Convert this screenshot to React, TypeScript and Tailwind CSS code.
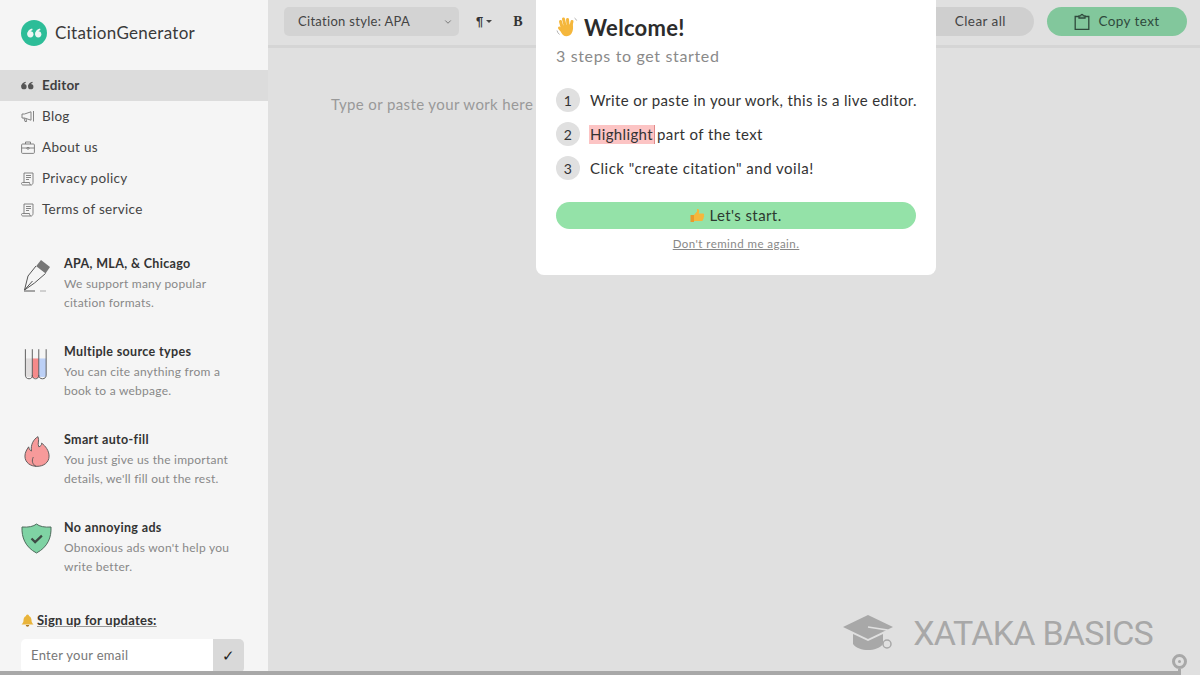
import type { ReactNode } from "react";
import { ChevronDown } from "lucide-react";

const FONT = "font-['Lato','Open_Sans',sans-serif]";

function QuoteMark({ className }: { className?: string }) {
  return (
    <svg viewBox="0 0 16 10" className={className} fill="currentColor">
      <circle cx="3.600" cy="6.400" r="3.300" />
      <path d="M0.300 6.400C0.300 3.500 2.200 1 5.500 0.300L6 1.700C4.400 2.300 3.400 3.300 3.200 4.700z" />
      <circle cx="12" cy="6.400" r="3.300" />
      <path d="M8.700 6.400C8.700 3.500 10.600 1 13.900 0.300L14.400 1.700C12.800 2.300 11.800 3.300 11.600 4.700z" />
    </svg>
  );
}

function Logo() {
  return (
    <div className="w-[26px] h-[26px] rounded-full bg-[#2dbd98] flex items-center justify-center">
      <QuoteMark className="w-[15px] h-[10px] text-[#eef6f4]" />
    </div>
  );
}

function Megaphone() {
  return (
    <svg viewBox="0 0 14 13" className="w-[14px] h-[13px]" fill="none" stroke="#777" strokeWidth="0.9">
      <path d="M12.500 1v10.500M10 1.800L3.500 4H1v4h2.500L10 10.200zM3 8l1 3.500h1.600L5 8.800" />
    </svg>
  );
}

function Briefcase() {
  return (
    <svg viewBox="0 0 14 13" className="w-[14px] h-[13px]" fill="none" stroke="#777" strokeWidth="0.9">
      <rect x="0.600" y="3" width="12.800" height="9.400" rx="1" />
      <path d="M4.500 3V1h5v2M0.600 7h5.400M8 7h5.400M6 6.500h2v1.500H6z" />
    </svg>
  );
}

function Scroll() {
  return (
    <svg viewBox="0 0 13 14" className="w-[13px] h-[14px]" fill="none" stroke="#777" strokeWidth="0.9">
      <path d="M3 10.500V1h9v9.500c0 1-.5 2-1.500 2.500H2c-1 0-1.500-.8-1.500-1.500 0-.6.4-1 1-1h7c0 .8.200 1.600 1 2.500M5 3.500h5M5 5.500h5M5 7.500h3" />
    </svg>
  );
}

function PenIcon() {
  return (
    <svg viewBox="0 0 28 34" className="w-[28px] h-[34px]" fill="none">
      <path d="M18 1l9 7-4.500 6.500-10-6.500z" fill="#777" />
      <path d="M13 7L5 17 1.500 31l10-7 11-9.500" stroke="#555" strokeWidth="1" fill="#f5f5f5" />
      <path d="M1.500 31l8-9" stroke="#555" strokeWidth="1" />
      <path d="M1 32h11" stroke="#555" strokeWidth="1" />
      <path d="M17 32h6" stroke="#aaa" strokeWidth="1" />
    </svg>
  );
}

function TubesIcon() {
  return (
    <svg viewBox="0 0 26 34" className="w-[24px] h-[34px]" fill="none">
      <rect x="2" y="11" width="7" height="20" fill="#e0dddd" />
      <rect x="9" y="11" width="7" height="21" fill="#f58a8a" />
      <rect x="16" y="11" width="8" height="20" fill="#bcd0f6" />
      <path d="M1.500 1v28c0 2.500 1.500 4 4 4s3.500-1.500 3.500-4V1M9 29c0 2.500 1.500 4 3.500 4s3.500-1.500 3.500-4V1M16 29c0 2.500 1.500 4 4 4s4-1.500 4-4V1" stroke="#555" strokeWidth="1" />
    </svg>
  );
}

function FlameIcon() {
  return (
    <svg viewBox="0 0 28 34" className="w-[26px] h-[33px]" fill="none">
      <path d="M15 1c2 5-1 7 1 11 2-.5 3-2 3-4 4 3 8 8 8 14 0 7-6 11-13 11S1 29 1 22c0-4 2-7 4-10 .5 2 1 3.500 3 4.500C7 10 10 4 15 1z" fill="#f79a9a" stroke="#555" strokeWidth="1" />
      <path d="M13 33c-4-2-5-6-3-10" stroke="#555" strokeWidth="1" />
    </svg>
  );
}

function ShieldIcon() {
  return (
    <svg viewBox="0 0 31 31" className="w-[31px] h-[31px]" fill="none">
      <path d="M15.500 1c3 2.500 8 3.500 14.500 3 .5 10-3 20-14.500 26C4 24 .5 14 1 4c6.500.5 11.500-.5 14.500-3z" fill="#7fd3a4" stroke="#4d6a5b" strokeWidth="1" />
      <path d="M10.500 15.500l3.600 3.600 6.800-6.500" stroke="#3d4a44" strokeWidth="2.200" />
    </svg>
  );
}

function BellEmoji() {
  return (
    <svg viewBox="0 0 13 13" className="w-[13px] h-[13px]">
      <path d="M6.500 0.500c1 0 1.500.8 1.500 1.500 1.800.7 2.500 2.400 2.500 4.200 0 2 1 3.300 2 4.300H.500c1-1 2-2.300 2-4.300 0-1.800.700-3.500 2.500-4.200 0-.7.500-1.500 1.500-1.500z" fill="#e9b43a" />
      <path d="M4.800 11h3.400c0 1-.8 1.700-1.700 1.700S4.800 12 4.800 11z" fill="#b07a20" />
    </svg>
  );
}

function WaveEmoji() {
  return (
    <svg viewBox="0 0 22 20" className="w-[22px] h-[20px]">
      <g stroke="#f5b73c" strokeWidth="3" strokeLinecap="round" fill="none">
        <path d="M6 10L4.500 4.500" />
        <path d="M9 8.500L7.500 2" />
        <path d="M12 8L11.500 2.500" />
        <path d="M15 9L16 4.500" />
        <path d="M7 15l-3.500-4" />
      </g>
      <path d="M5.500 8.500l11-1.500c1 3 .8 6.500-1 9.500-2 3-6 3.500-8.500 1.500-2-1.500-2.500-5-1.500-9.500z" fill="#f5b73c" />
      <path d="M1 13.500c.4 1.600 1.200 3 2.500 4M18.500 1c1 .6 1.800 1.500 2.200 2.600" stroke="#aaa" strokeWidth="0.900" fill="none" />
    </svg>
  );
}

function ThumbEmoji() {
  return (
    <svg viewBox="0 0 15 15" className="w-[15px] h-[15px]">
      <path d="M0.500 7h3.500v7H.5z" fill="#e89a2c" />
      <path d="M4 7l3-3.500V1c1.500-.5 2.500.8 2.200 2.300L8.800 5.500H13c1.200 0 1.500 1.300.8 2 .6.600.5 1.600-.2 2 .3.800 0 1.500-.6 1.800.2.900-.3 1.700-1.300 1.700H6.500L4 13z" fill="#f5b73c" />
    </svg>
  );
}

function ClipboardIcon() {
  return (
    <svg viewBox="0 0 16 17" className="w-[16px] h-[17px]" fill="none" stroke="#2f4a3c" strokeWidth="1.300">
      <path d="M5 3.500H1.200v12.800h13.600V3.500H11M5 5V2.800h1.800C7 1 9 1 9.200 2.800H11V5z" />
    </svg>
  );
}

function Watermark() {
  return (
    <div className="absolute right-[47px] bottom-[24px] flex items-center gap-[20px] pointer-events-none">
      <svg viewBox="0 0 50 36" className="w-[50px] h-[36px]">
        <path d="M25 0l25 12-25 12L0 12z" fill="#a8a8a8" />
        <path d="M10 19l15 7 15-7v10c-3 4-9 6-15 6s-12-2-15-6z" fill="#a8a8a8" />
        <path d="M25 12l19 3v10" stroke="#e0e0e0" strokeWidth="1.500" fill="none" />
        <circle cx="44" cy="29" r="4" fill="#e0e0e0" stroke="#a8a8a8" strokeWidth="1.500" />
      </svg>
      <span className="font-['Roboto',sans-serif] text-[34px] leading-none text-[#a8a8a8] tracking-[-0.750px]">XATAKA BASICS</span>
    </div>
  );
}

const NAV = [
  { label: "Blog", icon: <Megaphone /> },
  { label: "About us", icon: <Briefcase /> },
  { label: "Privacy policy", icon: <Scroll /> },
  { label: "Terms of service", icon: <Scroll /> },
];

const FEATURES = [
  { title: "APA, MLA, & Chicago", lines: ["We support many popular", "citation formats."], icon: <div className="pl-[2px]"><PenIcon /></div> },
  { title: "Multiple source types", lines: ["You can cite anything from a", "book to a webpage."], icon: <div className="pl-[3px]"><TubesIcon /></div> },
  { title: "Smart auto-fill", lines: ["You just give us the important", "details, we'll fill out the rest."], icon: <div className="pl-[3px]"><FlameIcon /></div> },
  { title: "No annoying ads", lines: ["Obnoxious ads won't help you", "write better."], icon: <ShieldIcon /> },
];

function Sidebar() {
  return (
    <aside className="w-[268px] shrink-0 bg-[#f5f5f5] flex flex-col overflow-hidden">
      <div className="h-[70px] shrink-0 pl-[21px] flex items-center gap-[8px] pb-[4px]">
        <Logo />
        <span className="text-[17px] text-[#3a3a3a] tracking-[0.300px]">CitationGenerator</span>
      </div>
      <nav className="flex flex-col shrink-0">
        <div className="h-[31px] pl-[21px] flex items-center gap-[8px] bg-[#dcdcdc] text-[13.500px] font-bold text-[#3f3f3f] tracking-[0.200px]">
          <QuoteMark className="w-[13px] h-[9px] text-[#555]" />
          <span>Editor</span>
        </div>
        {NAV.map((n) => (
          <div key={n.label} className="h-[31px] pl-[21px] flex items-center text-[13.500px] text-[#444] tracking-[0.300px]">
            <span className="w-[21px] flex">{n.icon}</span>
            <span>{n.label}</span>
          </div>
        ))}
      </nav>
      <div className="mt-[29px] shrink-0 flex flex-col gap-[16px] pl-[21px]">
        {FEATURES.map((f) => (
          <div key={f.title} className="h-[72px] flex">
            <div className="w-[43px] shrink-0 pt-[5px]">{f.icon}</div>
            <div>
              <div className="h-[20px] leading-[20px] text-[12.500px] font-bold text-[#333] tracking-[0.350px]">{f.title}</div>
              {f.lines.map((l) => (
                <div key={l} className="h-[18px] leading-[18px] mt-[1px] text-[12px] text-[#888] tracking-[0.250px]">{l}</div>
              ))}
            </div>
          </div>
        ))}
      </div>
      <div className="mt-[21px] shrink-0 pl-[21px] flex items-center gap-[3px] text-[13px] font-bold text-[#333] tracking-[0.250px]">
        <BellEmoji />
        <span className="underline decoration-[#999]">Sign up for updates:</span>
      </div>
      <div className="mt-[8px] shrink-0 ml-[21px] w-[223px] h-[34px] flex rounded-[5px] overflow-hidden">
        <div className="flex-1 bg-white pl-[10px] flex items-center text-[13px] text-[#777] tracking-[0.300px]">Enter your email</div>
        <div className="w-[31px] bg-[#d9d9d9] flex items-center justify-center text-[15px] text-[#222]">✓</div>
      </div>
    </aside>
  );
}

function Toolbar() {
  return (
    <div className="h-[48px] shrink-0 border-b-[3px] border-[#d5d5d5] flex items-center pl-[16px] pr-[13px] pb-[2px]">
      <div className="w-[175px] h-[29px] bg-[#d3d3d3] rounded-[5px] flex items-center justify-between pl-[14px] pr-[6px] text-[13px] text-[#444] tracking-[0.300px]">
        <span>Citation style: APA</span>
        <ChevronDown size={10} className="text-[#666]" />
      </div>
      <span className="ml-[17px] text-[13px] text-[#333] font-bold font-['Liberation_Sans',sans-serif]">¶</span>
      <span className="ml-[3px] w-0 h-0 border-x-[3px] border-x-transparent border-t-[3px] border-t-[#444]" />
      <span className="ml-[21px] text-[14px] font-bold text-[#333] font-['Liberation_Serif',serif]">B</span>
      <div className="ml-auto flex items-center gap-[13px]">
        <div className="w-[98px] h-[29px] rounded-r-full bg-[#cfcfcf] flex items-center justify-end pr-[28px] text-[13.500px] text-[#444] tracking-[0.450px]">Clear all</div>
        <div className="w-[140px] h-[29px] rounded-full bg-[#82c79c] flex items-center justify-center gap-[8px] text-[13.500px] text-[#2f4a3c] tracking-[0.400px]">
          <ClipboardIcon />
          <span>Copy text</span>
        </div>
      </div>
    </div>
  );
}

function Step({ n, children }: { n: number; children: ReactNode }) {
  return (
    <div className="flex items-center h-[24px] whitespace-nowrap">
      <span className="w-[24px] h-[24px] shrink-0 rounded-full bg-[#e0e0e0] flex items-center justify-center text-[14px] text-[#333] mr-[10px]">{n}</span>
      {children}
    </div>
  );
}

function WelcomeModal() {
  return (
    <div className="absolute left-[536px] top-0 w-[400px] h-[275px] bg-white rounded-b-[8px] px-[20px] pt-[13px]">
      <div className="flex items-center gap-[6px] h-[28px]">
        <WaveEmoji />
        <span className="text-[22px] font-bold text-[#2c2c2c] tracking-[0.300px]">Welcome!</span>
      </div>
      <div className="mt-[3px] text-[16px] leading-[24px] text-[#8a8a8a] tracking-[0.650px]">3 steps to get started</div>
      <div className="mt-[20px] flex flex-col gap-[10px] text-[15px] text-[#333] tracking-[0.360px]">
        <Step n={1}><span>Write or paste in your work, this is a live editor.</span></Step>
        <Step n={2}>
          <span className="bg-[#fcc4c4] border-r border-[#e08a8a] h-[19px] leading-[19px] px-[1px] -ml-[1px] mr-[2px]">Highlight</span>
          <span className="tracking-[0.420px]">part of the text</span>
        </Step>
        <Step n={3}><span className="tracking-[0.500px]">Click "create citation" and voila!</span></Step>
      </div>
      <div className="mt-[22px] h-[27px] rounded-full bg-[#94e2a8] flex items-center justify-center gap-[4px] text-[15px] text-[#2c3a30] tracking-[0.400px]">
        <ThumbEmoji />
        <span>Let's start.</span>
      </div>
      <div className="mt-[8px] text-center text-[11.500px] leading-[14px] text-[#888] underline tracking-[0.450px]">Don't remind me again.</div>
    </div>
  );
}

export default function App() {
  return (
    <div className={`relative w-[1200px] h-[675px] overflow-hidden flex flex-col bg-[#e0e0e0] ${FONT}`}>
      <div className="flex h-[671px]">
        <Sidebar />
        <main className="flex-1 flex flex-col min-w-0">
          <Toolbar />
          <div className="pl-[63px] pt-[46px] text-[15px] leading-[20px] text-[#999] tracking-[0.380px]">Type or paste your work here</div>
        </main>
      </div>
      <div className="h-[4px] mr-[19px] bg-[#a8a8a8]" />
      <WelcomeModal />
      <Watermark />
      <div className="absolute right-[13px] bottom-0 flex flex-col items-center">
        <span className="w-[15px] h-[15px] rounded-full border-[3px] border-[#a8a8a8] flex items-center justify-center">
          <span className="w-[3px] h-[3px] rounded-full bg-[#a8a8a8]" />
        </span>
        <span className="w-[3px] h-[6px] bg-[#a8a8a8]" />
      </div>
    </div>
  );
}
